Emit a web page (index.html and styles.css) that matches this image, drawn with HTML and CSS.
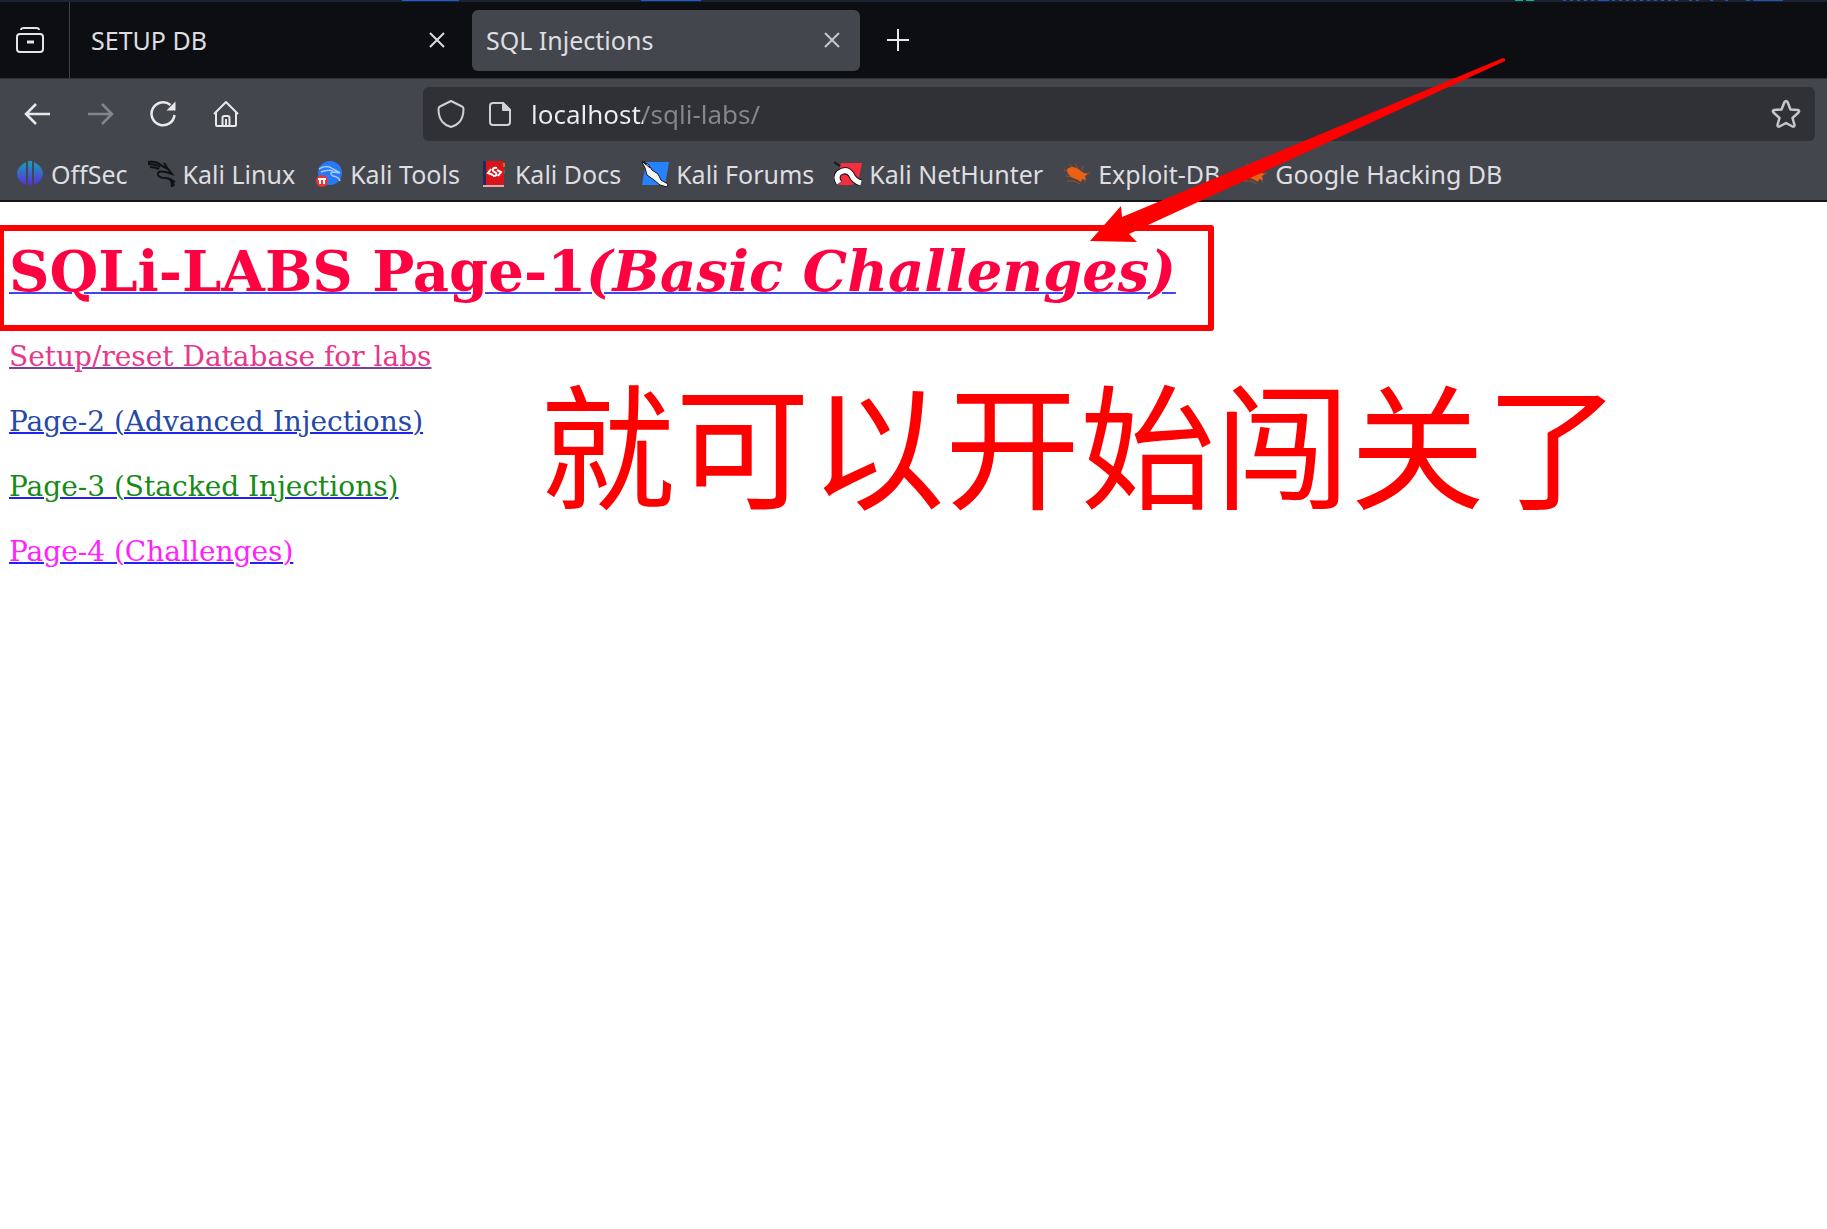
FILE: index.html
```html
<!DOCTYPE html>
<html lang="en">
<head>
  <meta charset="UTF-8" />
  <meta name="viewport" content="width=device-width, initial-scale=1.0"/>
  <title>SQL Injections</title>
  <link rel="stylesheet" href="styles.css">
</head>
<body>

<header class="browser">
  <div class="desktop-strip">
    <svg width="1827" height="2" viewBox="0 0 1827 2">
      <path stroke="#1d5fd0" stroke-width="2" d="M402 0h57M641 0h60"/>
      <path stroke="#0db29b" stroke-width="2" d="M1515 0h8M1526 0h8"/>
      <path stroke="#1f55b4" stroke-width="2" stroke-dasharray="3 4" d="M1563 0h115"/>
      <path stroke="#1f55b4" stroke-width="2" d="M1600 0h9M1689 0h3M1696 0h3M1710 0h3M1725 0h3M1746 0h4M1753 0h30"/>
    </svg>
  </div>
  <div class="tabs">
    <button class="view-btn" aria-label="Firefox view">
      <svg width="30" height="30" viewBox="0 0 30 30" fill="none" stroke="#e4e4e6" stroke-width="2">
        <path d="M6 5c0-2 1-2 3-2h12c2 0 3 0 3 2"/>
        <rect x="2" y="9" width="26" height="18" rx="3"/>
        <path d="M12 17h7" stroke-width="3"/>
      </svg>
    </button>
    <div class="tab">
      <span>SETUP DB</span>
      <button class="close" aria-label="Close tab"><svg width="16" height="16" viewBox="0 0 16 16"><path d="M1 1l14 14M15 1L1 15" stroke="#dcdcde" stroke-width="2"/></svg></button>
    </div>
    <div class="tab active">
      <span>SQL Injections</span>
      <button class="close" aria-label="Close tab"><svg width="16" height="16" viewBox="0 0 16 16"><path d="M1 1l14 14M15 1L1 15" stroke="#c8c8cb" stroke-width="2"/></svg></button>
    </div>
    <button class="new-tab" aria-label="New tab"><svg width="22" height="22" viewBox="0 0 22 22"><path d="M11 0v22M0 11h22" stroke="#e8e8ea" stroke-width="2"/></svg></button>
  </div>

  <div class="toolbar">
    <button class="nav" aria-label="Back"><svg width="28" height="28" viewBox="0 0 28 28" fill="none" stroke="#e8e8ea" stroke-width="2.500"><path d="M27 14H3M13 4L3 14l10 10"/></svg></button>
    <button class="nav" aria-label="Forward" disabled><svg width="28" height="28" viewBox="0 0 28 28" fill="none" stroke="#85868b" stroke-width="2.500"><path d="M2 14h24M16 4l10 10-10 10"/></svg></button>
    <button class="nav" aria-label="Reload"><svg width="28" height="28" viewBox="0 0 28 28" fill="none" stroke="#e8e8ea" stroke-width="2.500"><path d="M21.500 5A11.500 11.500 0 1 0 25.500 15"/><path d="M26.500 1.500v9h-9z" fill="#e8e8ea" stroke="none"/></svg></button>
    <button class="nav" aria-label="Home"><svg width="28" height="28" viewBox="0 0 28 28" fill="none" stroke="#e8e8ea" stroke-width="2" stroke-linejoin="round"><path d="M2 14L14 2l12 12M4 12v13q0 1 1 1h18q1 0 1-1V12M10.500 26v-8q0-2 2-2h3q2 0 2 2v8M14 19v7"/></svg></button>
    <div class="urlbar">
      <svg width="28" height="28" viewBox="0 0 28 28" fill="none" stroke="#d0d0d2" stroke-width="2" stroke-linejoin="round"><path d="M14 1L3 6.500Q1.500 7 1.500 9q0 8 4 13 3 3.500 8.500 5 5.500-1.500 8.500-5 4-5 4-13 0-2-1.500-2.500z"/></svg>
      <svg width="28" height="28" viewBox="0 0 28 28" fill="none" stroke="#d0d0d2" stroke-width="2" stroke-linejoin="round"><path d="M17 3H7Q4 3 4 6v16q0 3 3 3h14q3 0 3-3V10z"/><path d="M17 3v7h7z" fill="#d0d0d2"/></svg>
      <input type="text" id="url" aria-label="Address" value="localhost/sqli-labs/" />
      <button class="star" aria-label="Bookmark this page"><svg width="30" height="30" viewBox="0 0 30 30" fill="none" stroke="#c6c6c8" stroke-width="2.500" stroke-linejoin="round"><path d="M13.500 3Q15 1 16.500 3l3 7.500 7.500.5q2 .5.500 2.500L21.500 19l2 7q0 2-2 1.500L15 24l-6.500 3.500q-2 .5-2-1.500l2-7-6-5.500Q1 11.500 3 11l7.500-.5z"/></svg></button>
    </div>
  </div>

  <nav class="bookmarks">
    <a href="#">
      <svg width="28" height="28" viewBox="0 0 28 28">
        <defs><linearGradient id="os" x1="0" y1="0" x2="0" y2="28" gradientUnits="userSpaceOnUse"><stop offset="0" stop-color="#12a6bd"/><stop offset="1" stop-color="#6420d8"/></linearGradient></defs>
        <path fill="url(#os)" d="M10 2v23Q1 21 1 14T10 2M18 2v23q9-4 9-11T18 2M12 1h4v22l-2 4-2-4z"/>
      </svg>
      OffSec
    </a>
    <a href="#">
      <svg width="28" height="28" viewBox="0 0 28 28" fill="none" stroke="#101114" stroke-width="2">
        <path d="M0 2q9-1 14 4l6 3 4 5-6-2q-9-2-8 3 1 3 8 3 7 1 8 8"/>
        <path d="M0 4q8 0 12 3M2 7q5 0 9 2M16 3l4 6M22 19l5 3M23 19l1 8M20 18l4 3"/>
      </svg>
      Kali Linux
    </a>
    <a href="#">
      <svg width="28" height="28" viewBox="0 0 28 28">
        <circle cx="15" cy="13" r="12" fill="#267af5"/>
        <path d="M4 9q8-5 14 0l7 4-6-1q-6 1-1 4 6 1 7 5M6 12q7-3 12-1" fill="none" stroke="#a9cbff" stroke-width="1.500"/>
        <circle cx="7" cy="21" r="6" fill="#ee3338"/>
        <path d="M3 19h8M5 19v5M9 19v5" stroke="#fff" stroke-width="2"/>
      </svg>
      Kali Tools
    </a>
    <a href="#">
      <svg width="28" height="28" viewBox="0 0 28 28">
        <path fill="#202a5c" d="M3 1h4v24H3z"/><path fill="#d9151b" d="M6 1h18v24H6z"/><path fill="#d9aeb0" d="M3 25h21v2H3z"/>
        <path fill="#d66a1c" d="M23 3h2v4h-2z"/><path fill="#297b50" d="M24 9h1v5h-1z"/>
        <path d="M11 9l-3 4 5 2M17 8q-5-1-4 3l3 2q2 3-3 3M17 10l4 2-3 4" fill="none" stroke="#fff" stroke-width="2"/>
      </svg>
      Kali Docs
    </a>
    <a href="#">
      <svg width="28" height="28" viewBox="0 0 28 28">
        <path fill="#2782ff" d="M5 2h23l-4 23H1z"/>
        <path d="M1 2l6 2 4 6 6 4 3 6 7 4-1 3-7-2-6-5-7-5-2-7z" fill="#f5f5f5" stroke="#15171c" stroke-width="1"/>
        <path d="M1 1l8 7M3 1l2 4" stroke="#15171c"/>
      </svg>
      Kali Forums
    </a>
    <a href="#">
      <svg width="28" height="28" viewBox="0 0 28 28">
        <path fill="#f52d3d" d="M7 3h21l-4 20q-10 4-22 1z"/>
        <path d="M5 23Q1 17 5 13q7-5 12 1 3 7 10 9" fill="none" stroke="#15171c" stroke-width="7"/>
        <path d="M5 23Q1 17 5 13q7-5 12 1 3 7 10 9" fill="none" stroke="#fff" stroke-width="5"/>
        <path d="M0 2l6 4" stroke="#15171c" stroke-width="2"/>
      </svg>
      Kali NetHunter
    </a>
    <a href="#">
      <svg width="28" height="28" viewBox="0 0 28 28">
        <g id="bug">
          <path d="M6 4l6 5M12 4l4 6M1 10l6 2M3 16l7 1M4 21h7l6 3M19 10l1-4M21 14l6-1M20 18l3 5" fill="none" stroke="#a34f24"/>
          <path fill="#ec6014" d="M4 9q5-4 11 0l6 4 4 1-3 2 1 4-4-1-1 3q-4-3-8-4-6-3-6-9z"/>
        </g>
      </svg>
      Exploit-DB
    </a>
    <a href="#">
      <svg width="28" height="28" viewBox="0 0 28 28"><use href="#bug"/></svg>
      Google Hacking DB
    </a>
  </nav>
</header>

<main class="page">
  <h1><a href="#">SQLi-LABS Page-1<i>(Basic Challenges)</i></a></h1>
  <ul class="links">
    <li><a class="setup" href="#">Setup/reset Database for labs</a></li>
    <li><a class="advanced" href="#">Page-2 (Advanced Injections)</a></li>
    <li><a class="stacked" href="#">Page-3 (Stacked Injections)</a></li>
    <li><a class="challenges" href="#">Page-4 (Challenges)</a></li>
  </ul>

  <!-- red marks drawn over the page -->
  <div class="mark-box"></div>
  <p class="mark-note" lang="zh-CN">就可以开始闯关了</p>
  <svg class="mark-arrow" width="416" height="186" viewBox="0 0 416 186">
    <path fill="#f00" d="M0 184l31-35 1 11L413 1q3 0 2 3L58 168l-19 9 8 8z"/>
  </svg>
</main>

</body>
</html>
```

FILE: styles.css
```css
* { box-sizing: border-box; }
body { margin: 0; background: #fff; font-family: "DejaVu Serif", serif; }
button { background: none; border: none; padding: 0; display: flex; align-items: center; justify-content: center; }
svg { display: block; flex: none; }

.browser { font-family: "Noto Sans", sans-serif; font-size: 25px; color: #dedee0; background: #44464d; }
.desktop-strip { height: 2px; background: #1b2230; overflow: hidden; }

.tabs {
  display: flex;
  align-items: center;
  gap: 7px;
  height: 77px;
  background: #0d0e12;
  border-bottom: 1px solid #303138;
}
.view-btn { width: 70px; height: 76px; padding-right: 10px; border-right: 1px solid #404147; }
.tab {
  display: flex;
  align-items: center;
  justify-content: space-between;
  width: 388px;
  height: 61px;
  padding: 0 20px 0 14px;
  border-radius: 6px;
}
.tab.active { background: #44464d; }
.close { width: 16px; height: 16px; }
.new-tab { width: 62px; height: 58px; }

.toolbar { display: flex; align-items: center; height: 69px; padding: 0 12px 0 5px; }
.nav { width: 63px; height: 54px; }
.urlbar {
  display: flex;
  align-items: center;
  flex: 1;
  gap: 21px;
  height: 54px;
  margin-left: 166px;
  padding: 0 14px;
  background: #303136;
  border-radius: 6px;
}
#url {
  flex: 1;
  min-width: 0;
  height: 40px;
  margin-left: -4px;
  padding: 0;
  border: none;
  outline: none;
  font: inherit;
  font-size: 26px;
  /* host bright, path dimmed */
  background: linear-gradient(90deg, #ededf0 112px, #85868a 112px);
  -webkit-background-clip: text;
  background-clip: text;
  color: transparent;
}

.bookmarks {
  display: flex;
  align-items: center;
  gap: 20px;
  height: 54px;
  padding: 0 16px;
  border-bottom: 2px solid #15161a;
}
.bookmarks a { display: flex; align-items: center; gap: 7px; color: #dedee0; text-decoration: none; white-space: nowrap; }

.page { position: relative; padding: 37px 9px 0; }
h1 { margin: 0; font-size: 56px; line-height: 64px; }
h1 a { color: #ff0040; text-decoration: underline 2px #4444ee; }
.links { list-style: none; margin: 37px 0 0; padding: 0; font-size: 28px; line-height: 33px; }
.links li { margin-bottom: 32px; }
.links a { text-decoration: underline 2px #2222ee; }
.links .setup { color: #e8388a; text-decoration-color: #7a3fa8; }
.links .advanced { color: #2449a8; }
.links .stacked { color: #168c16; }
.links .challenges { color: #ff22ff; }

.mark-box {
  position: absolute;
  left: -2px;
  top: 23px;
  width: 1216px;
  height: 106px;
  border: 6px solid #f00;
  border-radius: 3px;
}
.mark-note {
  position: absolute;
  left: 540px;
  top: 158px;
  margin: 0;
  font-family: "Noto Sans CJK SC", sans-serif;
  font-size: 135px;
  line-height: 160px;
  color: #f00;
  white-space: nowrap;
}
.mark-arrow { position: absolute; left: 1090px; top: -145px; }
```
